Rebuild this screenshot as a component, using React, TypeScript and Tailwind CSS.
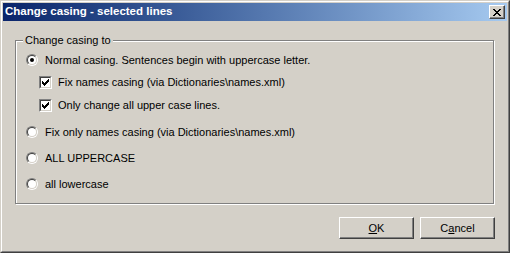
import React from "react";

const font = { fontFamily: '"Liberation Sans", Arial, sans-serif' };

function Radio({ checked }: { checked?: boolean }) {
  return (
    <div className="relative w-[12px] h-[12px] rounded-full border border-t-[#808080] border-l-[#808080] border-b-white border-r-white shrink-0">
      <div className="w-[10px] h-[10px] rounded-full border border-t-[#404040] border-l-[#404040] border-b-[#d4d0c8] border-r-[#d4d0c8] bg-white flex items-center justify-center">
        {checked && <div className="w-[4px] h-[4px] rounded-full bg-black" />}
      </div>
    </div>
  );
}

function Check() {
  return (
    <div className="w-[13px] h-[13px] border border-t-[#808080] border-l-[#808080] border-b-white border-r-white shrink-0">
      <div className="w-[11px] h-[11px] border border-t-[#404040] border-l-[#404040] border-b-[#d4d0c8] border-r-[#d4d0c8] bg-white flex items-center justify-center">
        <svg width="7" height="7" viewBox="0 0 7 7" shapeRendering="crispEdges">
          <rect x="6" y="0" width="1" height="1" fill="#000" />
          <rect x="5" y="1" width="2" height="1" fill="#000" />
          <rect x="0" y="2" width="1" height="1" fill="#000" />
          <rect x="4" y="2" width="3" height="1" fill="#000" />
          <rect x="0" y="3" width="2" height="1" fill="#000" />
          <rect x="3" y="3" width="3" height="1" fill="#000" />
          <rect x="0" y="4" width="5" height="1" fill="#000" />
          <rect x="1" y="5" width="3" height="1" fill="#000" />
          <rect x="2" y="6" width="1" height="1" fill="#000" />
        </svg>
      </div>
    </div>
  );
}

function Button({ children }: { children: React.ReactNode }) {
  return (
    <div className="w-[75px] h-[22px] border border-t-white border-l-white border-b-[#404040] border-r-[#404040] shadow-[inset_-1px_-1px_0_#808080] flex items-center justify-center text-[11px] text-black">
      {children}
    </div>
  );
}

export default function App() {
  return (
    <div
      className="w-[510px] h-[253px] bg-[#d4d0c8] border border-t-[#d4d0c8] border-l-[#d4d0c8] border-b-[#404040] border-r-[#404040] flex flex-col"
      style={font}
    >
      <div className="flex-1 border border-t-white border-l-white border-b-[#808080] border-r-[#808080] p-[1px] flex flex-col">
        {/* Title bar */}
        <div className="h-[18px] bg-gradient-to-r from-[#0a246a] to-[#a6caf0] flex items-center pl-[2px] pr-[2px]">
          <span className="text-white font-bold text-[11.5px] leading-none flex-1">
            Change casing - selected lines
          </span>
          <div className="w-[16px] h-[14px] bg-[#d4d0c8] border border-t-white border-l-white border-b-[#404040] border-r-[#404040] shadow-[inset_-1px_-1px_0_#808080] flex items-center justify-center">
            <svg width="8" height="7" viewBox="0 0 8 7" shapeRendering="crispEdges">
              <path d="M0 0h2v1h-2zM6 0h2v1h-2zM1 1h2v1h-2zM5 1h2v1h-2zM2 2h4v1h-4zM3 3h2v1h-2zM2 4h4v1h-4zM1 5h2v1h-2zM5 5h2v1h-2zM0 6h2v1h-2zM6 6h2v1h-2z" fill="#000" />
            </svg>
          </div>
        </div>

        {/* Body */}
        <div className="flex-1 flex flex-col pl-[12px]">
          <div className="relative mt-[19px] w-[479px] h-[164px] border border-[#808080] shadow-[inset_1px_1px_0_#fff,1px_1px_0_#fff] text-[11px] text-black">
            <div className="absolute left-[7px] top-[-8px] bg-[#d4d0c8] px-[2px] leading-[14px]">
              Change casing to
            </div>
            <div className="flex flex-col pl-[10px] pt-[9px]">
              <div className="h-[20px] flex items-center gap-[7px]">
                <Radio checked />
                <span>Normal casing. Sentences begin with uppercase letter.</span>
              </div>
              <div className="h-[20px] mt-[2px] flex items-center gap-[6px] pl-[13px]">
                <Check />
                <span>Fix names casing (via Dictionaries\names.xml)</span>
              </div>
              <div className="h-[20px] mt-[3px] flex items-center gap-[6px] pl-[13px]">
                <Check />
                <span>Only change all upper case lines.</span>
              </div>
              <div className="h-[20px] mt-[7px] flex items-center gap-[7px]">
                <Radio />
                <span>Fix only names casing (via Dictionaries\names.xml)</span>
              </div>
              <div className="h-[20px] mt-[6px] flex items-center gap-[7px]">
                <Radio />
                <span>ALL UPPERCASE</span>
              </div>
              <div className="h-[20px] mt-[6px] flex items-center gap-[7px]">
                <Radio />
                <span>all lowercase</span>
              </div>
            </div>
          </div>
          <div className="mt-[13px] flex justify-end gap-[6px] w-[480px]">
            <Button>
              <span className="underline underline-offset-1">O</span>K
            </Button>
            <Button>
              C<span className="underline underline-offset-1">a</span>ncel
            </Button>
          </div>
        </div>
      </div>
    </div>
  );
}
